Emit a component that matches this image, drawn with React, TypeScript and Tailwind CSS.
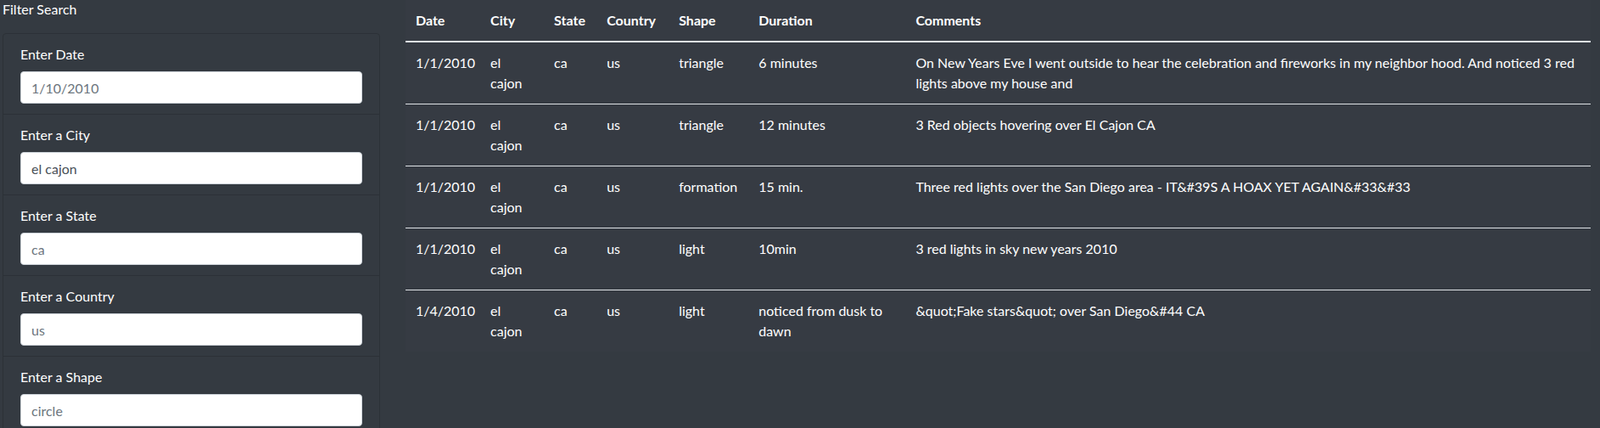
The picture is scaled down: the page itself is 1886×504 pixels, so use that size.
import React from "react"

const sightings = [
  {
    date: "1/1/2010",
    city: "el cajon",
    state: "ca",
    country: "us",
    shape: "triangle",
    duration: "6 minutes",
    comments:
      "On New Years Eve I went outside to hear the celebration and fireworks in my neighbor hood. And noticed 3 red lights above my house and",
  },
  {
    date: "1/1/2010",
    city: "el cajon",
    state: "ca",
    country: "us",
    shape: "triangle",
    duration: "12 minutes",
    comments: "3 Red objects hovering over El Cajon CA",
  },
  {
    date: "1/1/2010",
    city: "el cajon",
    state: "ca",
    country: "us",
    shape: "formation",
    duration: "15 min.",
    comments: "Three red lights over the San Diego area - IT&#39S A HOAX YET AGAIN&#33&#33",
  },
  {
    date: "1/1/2010",
    city: "el cajon",
    state: "ca",
    country: "us",
    shape: "light",
    duration: "10min",
    comments: "3 red lights in sky new years 2010",
  },
  {
    date: "1/4/2010",
    city: "el cajon",
    state: "ca",
    country: "us",
    shape: "light",
    duration: "noticed from dusk to dawn",
    comments: "&quot;Fake stars&quot; over San Diego&#44 CA",
  },
]

const filters = [
  { label: "Enter Date", placeholder: "1/10/2010", value: "" },
  { label: "Enter a City", placeholder: "", value: "el cajon" },
  { label: "Enter a State", placeholder: "ca", value: "" },
  { label: "Enter a Country", placeholder: "us", value: "" },
  { label: "Enter a Shape", placeholder: "circle", value: "" },
]

const columns = [
  { name: "Date", width: "w-[88px]" },
  { name: "City", width: "w-[75px]" },
  { name: "State", width: "w-[62px]" },
  { name: "Country", width: "w-[85px]" },
  { name: "Shape", width: "w-[94px]" },
  { name: "Duration", width: "w-[185px]" },
  { name: "Comments", width: "w-[807px]" },
]

export default function App() {
  return (
    <div className="min-h-[504px] w-[1886px] bg-[#343a41] text-white font-['Segoe_UI',Lato,sans-serif] text-base leading-6 flex">
      {/* filter sidebar */}
      <div className="w-[448px] shrink-0 pl-[3px]">
        <div className="h-6 -mt-[1px]">Filter Search</div>
        <ul className="mt-4 border border-[#2c3137] rounded-[4px] overflow-hidden">
          {filters.map((f, i) => (
            <li key={f.label} className={`px-5 py-3 ${i > 0 ? "border-t border-[#2c3137]" : ""}`}>
              <label className="block mb-2 text-white">{f.label}</label>
              <input
                type="text"
                readOnly
                defaultValue={f.value}
                placeholder={f.placeholder}
                className="block w-full h-[38px] px-3 bg-white border border-[#ced4da] rounded-[4px] text-[#495057] placeholder:text-[#6c757d] outline-none"
              />
            </li>
          ))}
        </ul>
      </div>

      {/* results table */}
      <div className="ml-[30px] w-[1397px]">
        <table className="table-fixed w-full border-collapse bg-[#363b43]">
          <colgroup>
            {columns.map((c) => (
              <col key={c.name} className={c.width} />
            ))}
          </colgroup>
          <thead>
            <tr className="border-b-2 border-[#dee2e6]">
              {columns.map((c) => (
                <th key={c.name} className="p-3 text-left font-bold align-bottom">
                  {c.name}
                </th>
              ))}
            </tr>
          </thead>
          <tbody>
            {sightings.map((s, i) => (
              <tr key={i} className={i > 0 ? "border-t border-[#dee2e6]" : ""}>
                <td className="p-3 align-top">{s.date}</td>
                <td className="p-3 align-top">{s.city}</td>
                <td className="p-3 align-top">{s.state}</td>
                <td className="p-3 align-top">{s.country}</td>
                <td className="p-3 align-top">{s.shape}</td>
                <td className="p-3 align-top">{s.duration}</td>
                <td className="p-3 align-top h-[72px]">{s.comments}</td>
              </tr>
            ))}
          </tbody>
        </table>
      </div>
    </div>
  )
}
